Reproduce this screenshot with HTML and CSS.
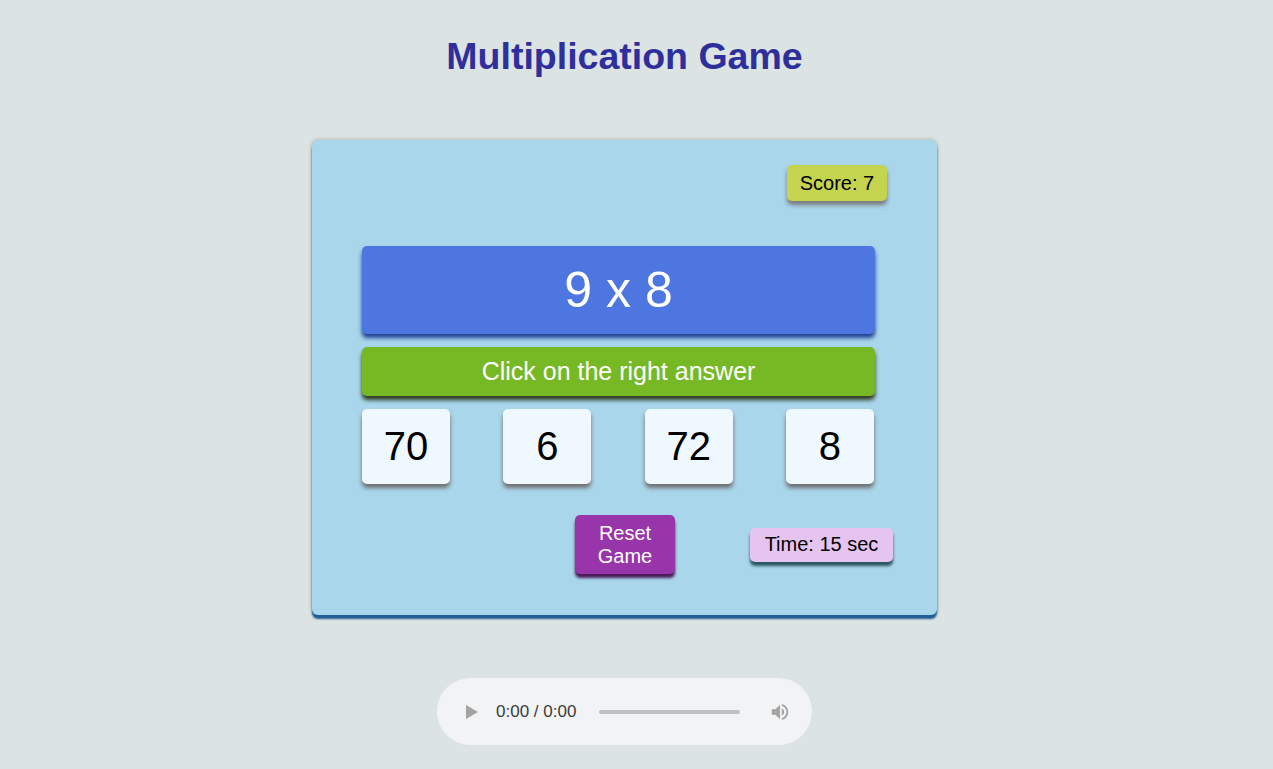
FILE: index.html
```html
<!DOCTYPE html>
<html>
<head>
<meta charset="utf-8">
<title>Multiplication Game</title>
<link rel="stylesheet" href="styles.css">
</head>
<body>
<div class="page">
  <h1 class="title">Multiplication Game</h1>
  <div class="container">
    <div class="score-row">
      <div class="score">Score: 7</div>
    </div>
    <div class="question">9 x 8</div>
    <div class="instruction">Click on the right answer</div>
    <div class="choices">
      <div class="choice">70</div>
      <div class="choice">6</div>
      <div class="choice">72</div>
      <div class="choice">8</div>
    </div>
    <div class="bottom-row">
      <div class="reset">Reset<br>Game</div>
      <div class="time">Time: 15 sec</div>
    </div>
  </div>
  <div class="audio">
    <svg class="play" width="14" height="16" viewBox="0 0 14 16"><path d="M1 1 L13 8 L1 15 Z" fill="#a3a3a3"/></svg>
    <span class="audio-time">0:00 / 0:00</span>
    <div class="track"></div>
    <svg class="vol" width="22" height="22" viewBox="0 0 24 24"><path d="M3 9v6h4l5 5V4L7 9H3z" fill="#a3a3a3"/><path d="M16.5 12c0-1.770-1.020-3.290-2.500-4.030v8.050c1.480-.730 2.500-2.250 2.500-4.020z" fill="#a3a3a3"/><path d="M14 3.230v2.060c2.890.860 5 3.540 5 6.710s-2.110 5.850-5 6.710v2.060c4.010-.910 7-4.490 7-8.770s-2.990-7.860-7-8.770z" fill="#a3a3a3"/></svg>
  </div>
</div>
</body>
</html>
```
FILE: styles.css
```css
html, body {
  margin: 0;
  padding: 0;
  background: #dce3e3;
  font-family: "Liberation Sans", Arial, sans-serif;
}

.page {
  width: 1249px;
  display: flex;
  flex-direction: column;
  align-items: center;
}

.title {
  margin: 35px 0 0 0;
  font-size: 37.5px;
  line-height: 43px;
  font-weight: bold;
  color: #2e2f9c;
}

.container {
  box-sizing: border-box;
  margin-top: 62px;
  width: 625px;
  height: 475px;
  padding: 25px 50px 0 50px;
  background: #a9d6eb;
  border-radius: 6px;
  box-shadow: 0 4px 2px #1f5c92, 0 0 4px rgba(0, 0, 0, 0.25);
}

.score-row {
  display: flex;
  justify-content: flex-end;
}

.score {
  width: 100px;
  height: 36px;
  display: flex;
  align-items: center;
  justify-content: center;
  background: #c5d44f;
  border-radius: 5px;
  font-size: 20px;
  color: #000;
  box-shadow: 0 4px 4px #7a7a7a;
}

.question {
  margin-top: 45px;
  width: 513px;
  height: 88px;
  display: flex;
  align-items: center;
  justify-content: center;
  background: #4e76e0;
  border-radius: 5px;
  color: #fff;
  font-size: 50px;
  box-shadow: 0 4px 4px #213f94;
}

.instruction {
  margin-top: 13px;
  width: 513px;
  height: 49px;
  display: flex;
  align-items: center;
  justify-content: center;
  background: #76b925;
  border-radius: 5px;
  color: #fff;
  font-size: 25px;
  box-shadow: 0 4px 4px #2d3a1c;
}

.choices {
  margin-top: 13px;
  width: 512px;
  display: flex;
  justify-content: space-between;
}

.choice {
  width: 88px;
  height: 75px;
  display: flex;
  align-items: center;
  justify-content: center;
  background: #f0f8ff;
  border-radius: 5px;
  font-size: 40px;
  color: #000;
  box-shadow: 0 4px 4px #6f6f6f;
}

.bottom-row {
  margin-top: 31px;
  display: flex;
  align-items: center;
}

.reset {
  flex-shrink: 0;
  margin-left: 213px;
  width: 100px;
  height: 59px;
  display: flex;
  align-items: center;
  justify-content: center;
  text-align: center;
  background: #9835aa;
  border-radius: 5px;
  color: #fff;
  font-size: 20px;
  line-height: 23px;
  box-shadow: 0 4px 3px #4b1a57;
}

.time {
  flex-shrink: 0;
  margin-left: 75px;
  width: 143px;
  height: 34px;
  display: flex;
  align-items: center;
  justify-content: center;
  background: #e6c4f0;
  border-radius: 5px;
  color: #000;
  font-size: 20px;
  box-shadow: 0 4px 3px #2b5560;
}

.audio {
  box-sizing: border-box;
  margin-top: 63px;
  width: 375px;
  height: 67px;
  border-radius: 34px;
  background: #f1f3f4;
  display: flex;
  align-items: center;
  padding-left: 28px;
}

.play {
  display: block;
}

.audio-time {
  margin-left: 17px;
  font-size: 17px;
  color: #3c3c3c;
}

.track {
  margin-left: 23px;
  width: 141px;
  height: 4px;
  border-radius: 2px;
  background: #c0c0c0;
}

.vol {
  margin-left: 29px;
  display: block;
}
```
